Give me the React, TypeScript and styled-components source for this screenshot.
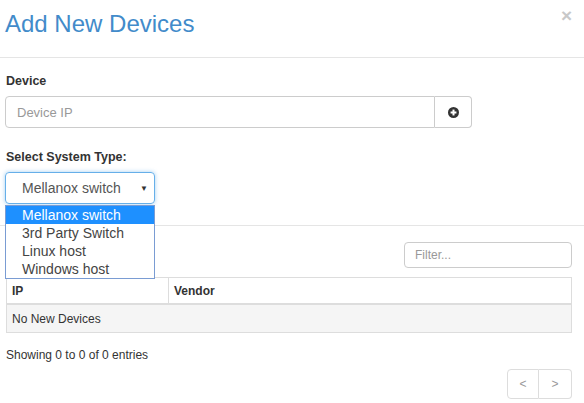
import React from 'react'
import styled, { createGlobalStyle } from 'styled-components'

const GlobalStyle = createGlobalStyle`
    body {
        margin: 0;
        background: #ffffff;
        color: #333333;
        font-family: 'Liberation Sans', Arial, sans-serif;
        font-size: 12px;
    }
`

const Header = styled.div`
    height: 57px;
    border-bottom: solid 1px #e5e5e5;
    display: flex;
    justify-content: space-between;
    align-items: flex-start;
    padding: 0 12px 0 5px;
`

const Title = styled.h4`
    margin: 0;
    padding-top: 9px;
    font-size: 24px;
    line-height: 30px;
    font-weight: normal;
    color: #428bca;
`

const Close = styled.span`
    padding-top: 6px;
    font-size: 19px;
    line-height: 20px;
    font-weight: bold;
    color: #c8c8c8;
`

const Section = styled.div<{ $divider?: boolean }>`
    padding: 0 12px 0 5px;
    border-top: ${p => (p.$divider ? 'solid 1px #e5e5e5' : 'none')};
`

const Label = styled.label<{ $top: number }>`
    display: block;
    margin: ${p => p.$top}px 0 7px 1px;
    font-weight: bold;
    font-size: 12.5px;
    line-height: 16px;
`

const InputGroup = styled.div`
    display: flex;
    width: 467px;
    height: 32px;
`

const TextInput = styled.div`
    flex: 1;
    box-sizing: border-box;
    border: solid 1px #cccccc;
    border-radius: 4px 0 0 4px;
    display: flex;
    align-items: center;
    padding-left: 11px;
    font-size: 13px;
    color: #999999;
`

const AddOn = styled.div`
    width: 37px;
    box-sizing: border-box;
    border: solid 1px #cccccc;
    border-left: none;
    border-radius: 0 4px 4px 0;
    display: flex;
    align-items: center;
    justify-content: center;
`

const SelectWrap = styled.div`
    position: relative;
    width: 150px;
    margin-bottom: 21px;
`

const SelectBox = styled.div`
    height: 32px;
    box-sizing: border-box;
    border: solid 1px #66afe9;
    border-radius: 4px;
    box-shadow: 0 0 4px rgba(102, 175, 233, 0.6);
    display: flex;
    align-items: center;
    justify-content: space-between;
    padding: 0 6px 0 16px;
    font-size: 14px;
    color: #555555;
`

const Caret = styled.span`
    font-size: 8px;
    color: #333333;
`

const OptionList = styled.ul`
    position: absolute;
    top: 33px;
    left: 0;
    width: 150px;
    box-sizing: border-box;
    margin: 0;
    padding: 0;
    list-style: none;
    background: #ffffff;
    border: solid 1px #7a9cd3;
    z-index: 2;
`

const Option = styled.li<{ $active?: boolean }>`
    height: 18px;
    line-height: 18px;
    padding-left: 16px;
    font-size: 14px;
    background: ${p => (p.$active ? '#1e90ff' : 'transparent')};
    color: ${p => (p.$active ? '#ffffff' : '#444444')};
`

const FilterRow = styled.div`
    display: flex;
    justify-content: flex-end;
    padding-top: 16px;
    margin-bottom: 9px;
`

const Filter = styled.div`
    width: 168px;
    height: 26px;
    box-sizing: border-box;
    border: solid 1px #cccccc;
    border-radius: 4px;
    display: flex;
    align-items: center;
    padding-left: 10px;
    font-size: 12px;
    color: #999999;
`

const Table = styled.table`
    width: 566px;
    margin-left: 1px;
    border-collapse: collapse;
    table-layout: fixed;
    font-size: 12px;
`

const Th = styled.th<{ $width?: number }>`
    width: ${p => (p.$width ? `${p.$width}px` : 'auto')};
    height: 25px;
    padding: 0 5px;
    text-align: left;
    font-weight: bold;
    border: solid 1px #dddddd;
    border-bottom-width: 2px;
`

const Td = styled.td`
    height: 27px;
    padding: 0 5px;
    background: #f5f5f5;
    border: solid 1px #dddddd;
`

const Info = styled.div`
    margin: 14px 0 0 1px;
    font-size: 12px;
    line-height: 16px;
`

const Pager = styled.div`
    display: flex;
    justify-content: flex-end;
    margin-top: 6px;
`

const PageButton = styled.div<{ $side: 'left' | 'right' }>`
    width: ${p => (p.$side === 'left' ? 32 : 33)}px;
    height: 30px;
    box-sizing: border-box;
    border: solid 1px #dddddd;
    border-left: ${p => (p.$side === 'right' ? 'none' : 'solid 1px #dddddd')};
    border-radius: ${p => (p.$side === 'left' ? '4px 0 0 4px' : '0 4px 4px 0')};
    display: flex;
    align-items: center;
    justify-content: center;
    font-size: 12px;
    color: #999999;
`

const PlusIcon = () => (
    <svg width="11" height="11" viewBox="0 0 12 12">
        <circle cx="6" cy="6" r="6" fill="#333333" />
        <rect x="2.8" y="4.9" width="6.4" height="2.2" fill="#ffffff" />
        <rect x="4.9" y="2.8" width="2.2" height="6.4" fill="#ffffff" />
    </svg>
)

const systemTypes = ['Mellanox switch', '3rd Party Switch', 'Linux host', 'Windows host']

const App = () => {
    return (
        <>
            <GlobalStyle />
            <Header>
                <Title>Add New Devices</Title>
                <Close>×</Close>
            </Header>
            <Section>
                <Label $top={15}>Device</Label>
                <InputGroup>
                    <TextInput>Device IP</TextInput>
                    <AddOn>
                        <PlusIcon />
                    </AddOn>
                </InputGroup>
                <Label $top={21}>Select System Type:</Label>
                <SelectWrap>
                    <SelectBox>
                        Mellanox switch
                        <Caret>▼</Caret>
                    </SelectBox>
                    <OptionList>
                        {systemTypes.map((t, i) => (
                            <Option key={t} $active={i === 0}>{t}</Option>
                        ))}
                    </OptionList>
                </SelectWrap>
            </Section>
            <Section $divider>
                <FilterRow>
                    <Filter>Filter...</Filter>
                </FilterRow>
                <Table>
                    <thead>
                        <tr>
                            <Th $width={151}>IP</Th>
                            <Th>Vendor</Th>
                        </tr>
                    </thead>
                    <tbody>
                        <tr>
                            <Td colSpan={2}>No New Devices</Td>
                        </tr>
                    </tbody>
                </Table>
                <Info>Showing 0 to 0 of 0 entries</Info>
                <Pager>
                    <PageButton $side="left">&lt;</PageButton>
                    <PageButton $side="right">&gt;</PageButton>
                </Pager>
            </Section>
        </>
    )
}

export default App
